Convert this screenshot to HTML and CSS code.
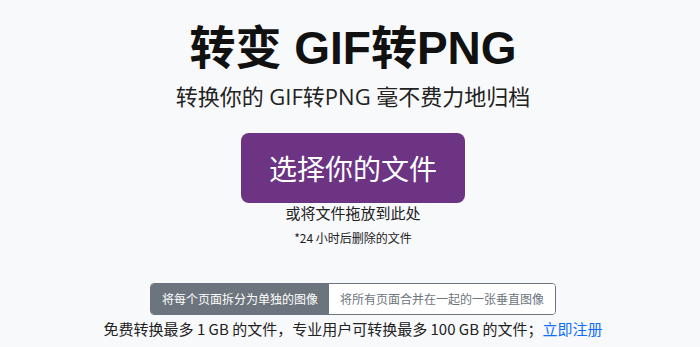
FILE: index.html
```html
<!DOCTYPE html>
<html lang="zh">
<head>
<meta charset="utf-8">
<link rel="stylesheet" href="styles.css">
</head>
<body>
<main class="hero">
  <h1 class="title">转变 GIF转PNG</h1>
  <p class="subtitle">转换你的 GIF转PNG 毫不费力地归档</p>
  <button class="pick">选择你的文件</button>
  <p class="drop">或将文件拖放到此处</p>
  <p class="note">*24 小时后删除的文件</p>
  <div class="toggle">
    <span class="opt active">将每个页面拆分为单独的图像</span>
    <span class="opt">将所有页面合并在一起的一张垂直图像</span>
  </div>
  <p class="limits">免费转换最多 1 GB 的文件，专业用户可转换最多 100 GB 的文件；<a class="signup" href="#">立即注册</a></p>
</main>
</body>
</html>
```
FILE: styles.css
```css
html, body {
  margin: 0;
  padding: 0;
  background: #f8f9fb;
  font-family: "Noto Sans CJK SC", "Liberation Sans", sans-serif;
  color: #212529;
}
.hero {
  display: flex;
  flex-direction: column;
  align-items: center;
  padding-top: 18px;
  padding-left: 6px;
}
.title {
  margin: 0;
  font-family: "Liberation Sans", "Noto Sans CJK SC", sans-serif;
  font-weight: 700;
  font-size: 46px;
  line-height: 60px;
  color: #111;
}
.subtitle {
  margin: 0;
  font-size: 22px;
  line-height: 36px;
  font-family: "Open Sans", "Noto Sans CJK SC", sans-serif;
  color: #222;
}
.pick {
  margin-top: 19px;
  width: 224px;
  height: 70px;
  border: none;
  border-radius: 8px;
  background: #6c3483;
  color: #fff;
  font-family: "Noto Sans CJK SC", sans-serif;
  font-size: 28px;
  padding: 0;
}
.drop {
  margin: 0;
  font-size: 15px;
  line-height: 20px;
  color: #222;
}
.note {
  margin: 7px 0 0;
  font-size: 12px;
  line-height: 16px;
  color: #222;
}
.toggle {
  display: flex;
  margin-top: 37px;
  border: 1px solid #6c757d;
  border-radius: 4px;
  overflow: hidden;
}
.opt {
  font-size: 12px;
  line-height: 30px;
  padding: 0 11px;
  background: #fff;
  color: #6c757d;
}
.opt.active {
  background: #6c757d;
  color: #fff;
}
.limits {
  margin: 3px 0 0;
  font-size: 15px;
  line-height: 22px;
  color: #222;
}
.signup {
  color: #0d6efd;
  text-decoration: none;
}
```
